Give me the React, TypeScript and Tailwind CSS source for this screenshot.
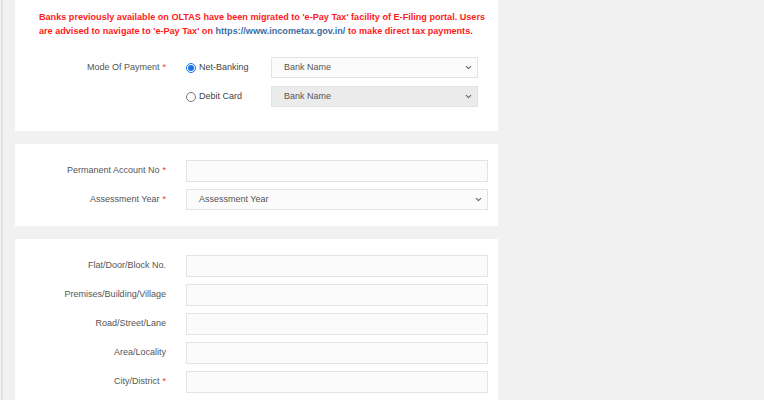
import { ChevronDown } from 'lucide-react';

function FakeSelect({ value, disabled = false, className = '' }: { value: string; disabled?: boolean; className?: string }) {
  return (
    <div
      className={`flex items-center justify-between h-[21px] pl-3 pr-[4px] border text-[9px] text-[#555] ${
        disabled ? 'bg-[#ebebeb] border-[#e2e2e2]' : 'bg-[#fbfbfb] border-[#e4e4e4]'
      } ${className}`}
    >
      <span>{value}</span>
      <ChevronDown size={9} strokeWidth={3} className="text-[#666]" />
    </div>
  );
}

function Field({ label, required = false, children }: { label: string; required?: boolean; children: React.ReactNode }) {
  return (
    <div className="flex items-center">
      <label className="w-[151px] text-right text-[9px] text-[#555] shrink-0">
        {label}
        {required && <span className="text-[#e33] ml-[3px]">*</span>}
      </label>
      <div className="ml-[20px] flex-1">{children}</div>
    </div>
  );
}

function TextBox() {
  return <div className="h-[22px] bg-[#fbfbfb] border border-[#e4e4e4]" />;
}

export default function App() {
  const addressFields = [
    { label: 'Flat/Door/Block No.' },
    { label: 'Premises/Building/Village' },
    { label: 'Road/Street/Lane' },
    { label: 'Area/Locality' },
    { label: 'City/District', required: true },
  ];

  return (
    <div
      className="h-[400px] w-full overflow-hidden bg-[#f1f1f1] flex"
      style={{ fontFamily: '"Liberation Sans", Arial, sans-serif' }}
    >
      <div className="ml-px w-[2px] bg-[#e2e2e2]" />
      <div className="ml-[12px] w-[483px] flex flex-col gap-[13px]">
        {/* Mode of payment */}
        <div className="bg-white h-[131px] shrink-0 pt-[10px]">
          <p className="pl-[24px] text-[9.1px] leading-[14px] font-bold text-[#ff1a1a] whitespace-nowrap">
            Banks previously available on OLTAS have been migrated to 'e-Pay Tax' facility of E-Filing portal. Users
            <br />
            are advised to navigate to 'e-Pay Tax' on{' '}
            <span className="text-[#3a6ea5]">https://www.incometax.gov.in/</span> to make direct tax payments.
          </p>
          <div className="flex mt-[19px]">
            <div className="w-[151px] text-right text-[9px] text-[#555] pt-[4px]">
              Mode Of Payment<span className="text-[#e33] ml-[3px]">*</span>
            </div>
            <div className="ml-[20px] flex flex-col gap-[8px] w-[292px]">
              <div className="flex items-center">
                <div className="w-[85px] flex items-center gap-[3px] text-[9px] text-[#444]">
                  <input type="radio" name="mode" defaultChecked className="w-[10px] h-[10px] m-0 accent-[#1a73e8]" />
                  Net-Banking
                </div>
                <FakeSelect value="Bank Name" className="flex-1" />
              </div>
              <div className="flex items-center">
                <div className="w-[85px] flex items-center gap-[3px] text-[9px] text-[#444]">
                  <input type="radio" name="mode" className="w-[10px] h-[10px] m-0" />
                  Debit Card
                </div>
                <FakeSelect value="Bank Name" disabled className="flex-1" />
              </div>
            </div>
          </div>
        </div>

        {/* PAN / AY */}
        <div className="bg-white shrink-0 pt-[16px] pb-[16px] pr-[10px] flex flex-col gap-[7px]">
          <Field label="Permanent Account No" required>
            <TextBox />
          </Field>
          <Field label="Assessment Year" required>
            <FakeSelect value="Assessment Year" />
          </Field>
        </div>

        {/* Address */}
        <div className="bg-white shrink-0 pt-[16px] pb-[16px] pr-[10px] flex flex-col gap-[7px]">
          {addressFields.map((f) => (
            <Field key={f.label} label={f.label} required={f.required}>
              <TextBox />
            </Field>
          ))}
          {/* next row, only the top edge of its box is in view */}
          <div className="flex">
            <div className="w-[151px] shrink-0" />
            <div className="ml-[20px] flex-1">
              <TextBox />
            </div>
          </div>
        </div>
      </div>
    </div>
  );
}
